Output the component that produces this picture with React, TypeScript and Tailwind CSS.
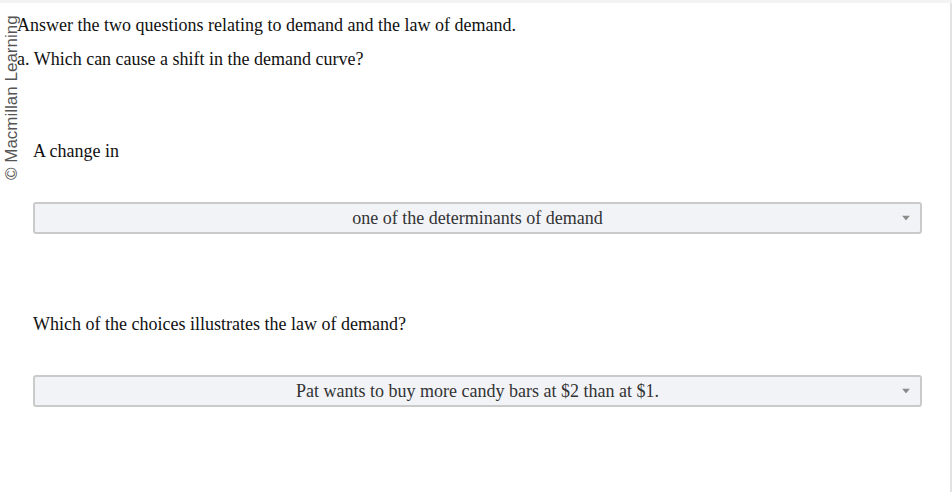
import { useState } from 'react';

interface SelectBoxProps {
  value: string;
}

function SelectBox({ value }: SelectBoxProps) {
  return (
    <div className="relative flex h-[32px] w-full items-center justify-center rounded-[3px] border-2 border-[#cacaca] bg-[#f2f3f7] text-[#333]">
      <span>{value}</span>
      <svg
        className="absolute right-[10px] top-1/2 -translate-y-1/2"
        width="8"
        height="5"
        viewBox="0 0 8 5"
      >
        <path d="M0 0 L8 0 L4 5 Z" fill="#8a8a8a" />
      </svg>
    </div>
  );
}

export default function App() {
  const [first] = useState('one of the determinants of demand');
  const [second] = useState('Pat wants to buy more candy bars at $2 than at $1.');

  return (
    <div className="relative h-[492px] w-[952px] overflow-hidden bg-white">
      <div className="h-[3px] w-full bg-[#f3f3f3]" />
      <div className="flex h-[489px] border-r-2 border-[#e2e2e2]">
        <div
          className="relative h-full w-full pr-[28px] text-[18px] text-[#111]"
          style={{ fontFamily: '"Liberation Serif", "Times New Roman", serif' }}
        >
          <span
            className="absolute left-[3px] top-[177px] origin-top-left -rotate-90 whitespace-nowrap text-[17px] leading-[18px] text-[#555]"
            style={{ fontFamily: '"Liberation Sans", Arial, sans-serif' }}
          >
            © Macmillan Learning
          </span>

          <p className="relative pl-[17px] pt-[12px] leading-[20px]">
            Answer the two questions relating to demand and the law of demand.
          </p>
          <p className="relative mt-[14px] pl-[17px] leading-[20px]">
            a. Which can cause a shift in the demand curve?
          </p>

          <div className="pl-[33px]">
            <p className="mt-[72px] leading-[20px]">A change in</p>
            <div className="mt-[41px]">
              <SelectBox value={first} />
            </div>

            <p className="mt-[80px] leading-[20px]">
              Which of the choices illustrates the law of demand?
            </p>
            <div className="mt-[41px]">
              <SelectBox value={second} />
            </div>
          </div>
        </div>
      </div>
    </div>
  );
}
